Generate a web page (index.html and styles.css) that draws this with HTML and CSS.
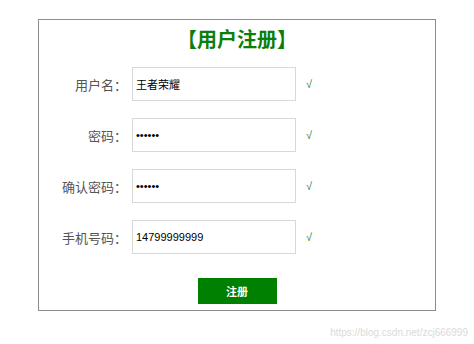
FILE: index.html
```html
<!DOCTYPE html>
<html lang="zh">
<head>
<meta charset="utf-8">
<title>用户注册</title>
<link rel="stylesheet" href="styles.css">
</head>
<body>
<div class="box">
  <h1 class="title">【用户注册】</h1>
  <form class="form">
    <label class="label">用户名：</label>
    <input class="field" type="text" value="王者荣耀">
    <span class="ok">√</span>

    <label class="label">密码：</label>
    <input class="field" type="password" value="123456">
    <span class="ok">√</span>

    <label class="label">确认密码：</label>
    <input class="field" type="password" value="123456">
    <span class="ok">√</span>

    <label class="label">手机号码：</label>
    <input class="field" type="text" value="14799999999">
    <span class="ok">√</span>
  </form>
  <div class="actions">
    <button class="submit" type="button">注册</button>
  </div>
</div>
<div class="watermark">https://blog.csdn.net/zcj666999</div>
</body>
</html>
```

FILE: styles.css
```css
html, body {
  margin: 0;
  padding: 0;
  background: #fff;
}
body {
  padding-top: 19px;
  font-family: "Noto Sans CJK SC", "Liberation Sans", sans-serif;
  position: relative;
  height: 325px;
}
.box {
  box-sizing: border-box;
  width: 398px;
  height: 292px;
  margin: 0 auto;
  border: 1px solid #8c8c8c;
  padding-top: 7px;
}
.title {
  margin: 0;
  font-size: 20px;
  line-height: 24px;
  font-weight: 700;
  color: #0a800a;
  text-align: center;
}
.form {
  margin-top: 16px;
  display: grid;
  grid-template-columns: 88px 164px auto;
  column-gap: 5px;
  row-gap: 17px;
  align-items: center;
}
.label {
  text-align: right;
  font-size: 13px;
  color: #555;
}
.field {
  box-sizing: border-box;
  width: 164px;
  height: 34px;
  margin: 0;
  border: 1px solid #d8d8d8;
  padding: 0 3px;
  font-family: "Liberation Sans", "Noto Sans CJK SC", sans-serif;
  font-size: 11px;
  color: #000;
  outline: none;
}
.ok {
  font-family: "Liberation Sans", sans-serif;
  font-size: 11px;
  color: #1f7a1f;
  margin-left: 5px;
}
.actions {
  margin-top: 24px;
  display: flex;
  justify-content: center;
}
.submit {
  width: 79px;
  height: 26px;
  border: none;
  background: #008000;
  color: #fff;
  font-family: "Noto Sans CJK SC", sans-serif;
  font-weight: 700;
  font-size: 11px;
  padding: 0;
}
.watermark {
  position: absolute;
  right: 6px;
  top: 327px;
  font-family: "Liberation Sans", sans-serif;
  font-size: 10px;
  color: #dadada;
}
```
